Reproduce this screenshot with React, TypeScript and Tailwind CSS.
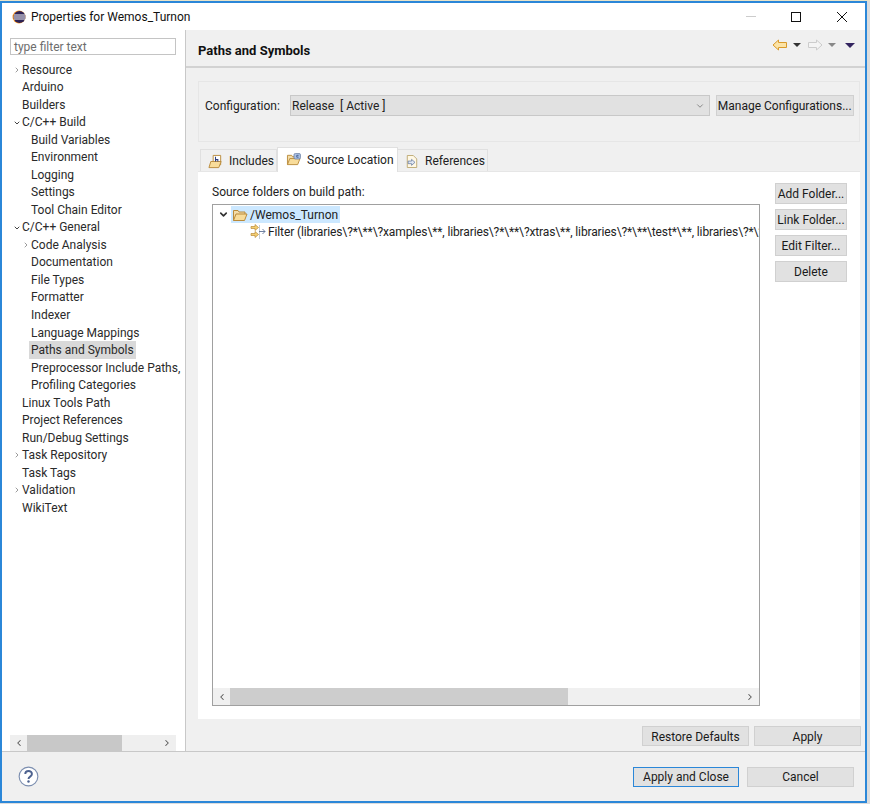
import { ChevronDown, ChevronLeft, ChevronRight } from "lucide-react";

const tree: [string, number, string?][] = [
  ["Resource", 1, "closed"],
  ["Arduino", 1],
  ["Builders", 1],
  ["C/C++ Build", 1, "open"],
  ["Build Variables", 2],
  ["Environment", 2],
  ["Logging", 2],
  ["Settings", 2],
  ["Tool Chain Editor", 2],
  ["C/C++ General", 1, "open"],
  ["Code Analysis", 2, "closed"],
  ["Documentation", 2],
  ["File Types", 2],
  ["Formatter", 2],
  ["Indexer", 2],
  ["Language Mappings", 2],
  ["Paths and Symbols", 2, "selected"],
  ["Preprocessor Include Paths,", 2],
  ["Profiling Categories", 2],
  ["Linux Tools Path", 1],
  ["Project References", 1],
  ["Run/Debug Settings", 1],
  ["Task Repository", 1, "closed"],
  ["Task Tags", 1],
  ["Validation", 1, "closed"],
  ["WikiText", 1],
];

function Btn({ label, className }: { label: string; className: string }) {
  return (
    <button className={`flex items-center justify-center whitespace-nowrap border border-[#d0d0d0] bg-[#e1e1e1] text-[12px] leading-none text-[#1a1a1a] ${className}`}>
      {label}
    </button>
  );
}

function TreeRow({ label, level, mark }: { label: string; level: number; mark?: string }) {
  return (
    <div className={`relative flex h-[17.52px] items-center whitespace-nowrap ${level === 1 ? "pl-[20px]" : "pl-[29px]"}`}>
      {mark === "closed" && (
        <ChevronRight className={`absolute top-[5px] h-[8px] w-[8px] text-[#888] ${level === 1 ? "left-[11px]" : "left-[20px]"}`} strokeWidth={2.5} />
      )}
      {mark === "open" && (
        <ChevronDown className="absolute left-[11px] top-[5px] h-[8px] w-[8px] text-[#444]" strokeWidth={3} />
      )}
      <span className={mark === "selected" ? "-ml-[2px] bg-[#d9d9d9] px-[2px]" : ""}>{label}</span>
    </div>
  );
}

function FolderIcon({ className, badge }: { className: string; badge?: boolean }) {
  return (
    <svg viewBox="0 0 16 14" className={className}>
      <path d="M1.5 12.5V2.5h4.5l1 1.5h6v2" fill="#f3dca8" stroke="#b98a3a" />
      <path d="M1.5 12.5L4 6h11l-2.5 6.5z" fill="#f8dc9a" stroke="#b98a3a" />
      {badge && (
        <>
          <rect x="8.5" y="0.5" width="7" height="6" rx="1.5" fill="#a9c0e4" stroke="#5a7098" strokeWidth="0.7" />
          <path d="M13.5 2.5h-2v2h2" fill="none" stroke="#2f4a80" strokeWidth="0.8" />
        </>
      )}
    </svg>
  );
}

export default function App() {
  return (
    <div className="h-[804px] w-[870px] overflow-hidden bg-[#dcdcdc] font-['Roboto',sans-serif] text-[12px] text-[#222]">
      <div className="h-px bg-[#e9e3c8]" />
      <div className="flex h-[802px] w-[867px] flex-col border-2 border-[#2b87d8] bg-white">
        {/* title bar */}
        <div className="flex h-[27px] shrink-0 items-center bg-white pl-[10px]">
          <svg viewBox="0 0 14 14" className="h-[14px] w-[14px]">
            <circle cx="7" cy="7" r="6.5" fill="#f7941e" />
            <circle cx="7.5" cy="7" r="6" fill="#2c2255" />
            <path d="M2 5h11M1.6 7h12M2 9h11" stroke="#fff" strokeWidth="1" />
          </svg>
          <span className="ml-[5px] text-[12px] text-[#111]">Properties for Wemos_Turnon</span>
          <div className="ml-auto flex items-center">
            <div className="mr-[35px] h-px w-[10px] bg-[#ccc]" />
            <div className="mr-[36px] h-[10px] w-[10px] border border-[#111]" />
            <svg viewBox="0 0 10 10" className="mr-[18px] h-[10px] w-[10px]">
              <path d="M0 0l10 10M10 0L0 10" stroke="#111" strokeWidth="1" />
            </svg>
          </div>
        </div>

        <div className="flex min-h-0 flex-1">
          {/* left tree */}
          <div className="flex w-[184px] shrink-0 flex-col border-r border-[#c8c8c8] bg-white">
            <div className="mx-[8px] mt-[8px] flex h-[17px] w-[166px] items-center border border-[#c4c4c4] px-[3px] text-[#6d6d6d]">
              type filter text
            </div>
            <div className="mt-[6px] flex-1 text-[#2a2a2a]">
              {tree.map(([label, level, mark]) => (
                <TreeRow key={label} label={label} level={level} mark={mark} />
              ))}
            </div>
            <div className="mx-[8px] flex h-[16px] w-[166px] items-center bg-[#efefef] text-[#555]">
              <div className="flex w-[17px] justify-center">
                <ChevronLeft className="h-[10px] w-[10px]" strokeWidth={2.5} />
              </div>
              <div className="h-full w-[95px] bg-[#c8c8c8]" />
              <div className="flex flex-1 justify-end pr-[4px]">
                <ChevronRight className="h-[10px] w-[10px]" strokeWidth={2.5} />
              </div>
            </div>
          </div>

          {/* right side */}
          <div className="flex min-w-0 flex-1 flex-col bg-[#f0f0f0]">
            <div className="flex h-[38px] shrink-0 items-center justify-between border-b-2 border-[#d2d2d2] pl-[12px] pr-[10px]">
              <span className="mt-[6px] text-[13px] font-bold text-[#111]">Paths and Symbols</span>
              <div className="-mt-[6px] flex items-center">
                <svg viewBox="0 0 16 12" className="h-[12px] w-[16px]">
                  <path d="M1 6l5.5-5v2.5h8v5h-8V11z" fill="#fbe3a6" stroke="#d99a2b" />
                </svg>
                <div className="ml-[5px] h-0 w-0 border-x-[4px] border-t-[4px] border-x-transparent border-t-[#333]" />
                <svg viewBox="0 0 16 12" className="ml-[6px] h-[12px] w-[16px]">
                  <path d="M15 6L9.5 1v2.5h-8v5h8V11z" fill="#f4f4f4" stroke="#ccc" />
                </svg>
                <div className="ml-[5px] h-0 w-0 border-x-[4px] border-t-[4px] border-x-transparent border-t-[#888]" />
                <div className="ml-[9px] h-0 w-0 border-x-[5px] border-t-[5px] border-x-transparent border-t-[#33245f]" />
              </div>
            </div>

            <div className="flex min-h-0 flex-1 flex-col pl-[12px] pr-[5px]">
              {/* configuration */}
              <div className="mt-[13px] flex h-[61px] shrink-0 items-start border border-[#e6e6e6] pl-[6px] pr-[5px] pt-[13px]">
                <span className="mt-[2px] w-[85px] shrink-0">Configuration:</span>
                <div className="flex h-[21px] w-[421px] items-center justify-between border border-[#c8c8c8] bg-[#e1e1e1] pl-[1px] pr-[4px]">
                  <span>Release&nbsp; [ Active ]</span>
                  <ChevronDown className="h-[10px] w-[10px] text-[#777]" />
                </div>
                <Btn label="Manage Configurations..." className="ml-[6px] h-[21px] w-[139px]" />
              </div>

              {/* tabs */}
              <div className="mt-[6px] flex h-[24px] shrink-0 items-end border-b border-[#e6e6e6]">
                <div className="ml-[2px] flex h-[22px] w-[77px] items-center gap-[6px] border border-b-0 border-[#e0e0e0] bg-[#f0f0f0] pl-[7px] pt-[1px]">
                  <svg viewBox="0 0 16 16" className="h-[15px] w-[15px] shrink-0">
                    <path d="M5.5 1.5h8v10h-8z" fill="#fff" stroke="#b98a3a" />
                    <path d="M1 14.5L3 8h11l-2.5 6.5z" fill="#f8dc9a" stroke="#b98a3a" />
                    <path d="M8 3v5M8 6h2.5v2" fill="none" stroke="#2f3f80" strokeWidth="1.1" />
                  </svg>
                  <span>Includes</span>
                </div>
                <div className="-mb-px flex h-[25px] w-[121px] items-center gap-[6px] border border-b-0 border-[#e0e0e0] bg-white pb-[1px] pl-[8px]">
                  <FolderIcon className="h-[13px] w-[15px] shrink-0" badge />
                  <span>Source Location</span>
                </div>
                <div className="flex h-[22px] w-[90px] items-center gap-[7px] border border-b-0 border-l-0 border-[#e0e0e0] bg-[#f0f0f0] pl-[8px] pt-[1px]">
                  <svg viewBox="0 0 14 16" className="h-[15px] w-[12px] shrink-0">
                    <path d="M1.5 1h7l4 4v10h-11z" fill="#fff8e6" stroke="#b9a46a" />
                    <path d="M2.5 7.5h4V5.5L10.5 9l-4 3.5v-2h-4z" fill="#dfe6f2" stroke="#5a7098" strokeWidth="0.8" />
                  </svg>
                  <span>References</span>
                </div>
              </div>

              {/* tab body */}
              <div className="flex min-h-0 flex-1 gap-[15px] bg-white pb-[13px] pl-[14px] pr-[13px] pt-[11px]">
                <div className="flex min-w-0 flex-1 flex-col">
                  <div className="flex h-[21px] shrink-0 items-start leading-[19px]">Source folders on build path:</div>
                  <div className="flex min-h-0 flex-1 flex-col overflow-hidden border border-[#a0a0a0]">
                    <div className="flex-1 overflow-hidden whitespace-nowrap pt-px">
                      <div className="flex h-[17px] items-center pl-[5px]">
                        <ChevronDown className="h-[11px] w-[11px] text-[#333]" strokeWidth={3.5} />
                        <div className="ml-[2px] flex h-[17px] items-center gap-[2px] bg-[#cce8ff] pl-px pr-[2px]">
                          <FolderIcon className="h-[14px] w-[16px]" />
                          <span>/Wemos_Turnon</span>
                        </div>
                      </div>
                      <div className="flex h-[17px] items-center pl-[37px]">
                        <svg viewBox="0 0 16 16" className="h-[16px] w-[16px] shrink-0">
                          <path d="M1 2.5h4V0.5l3.5 3-3.5 3v-2H1zM1 9.5h4v-2l3.5 3-3.5 3v-2H1z" fill="#f4cf72" stroke="#b98a3a" strokeWidth="0.7" />
                          <path d="M9.5 1v14" stroke="#b8bfca" strokeWidth="0.8" />
                          <path d="M9 7.5h6M12.5 5l2.5 2.5L12.5 10" fill="none" stroke="#5f7396" strokeWidth="0.9" />
                        </svg>
                        <span className="ml-[2px] tracking-[-0.12px]">{"Filter (libraries\\?*\\**\\?xamples\\**, libraries\\?*\\**\\?xtras\\**, libraries\\?*\\**\\test*\\**, libraries\\?*\\*"}</span>
                      </div>
                    </div>
                    <div className="flex h-[17px] shrink-0 items-center bg-[#f0f0f0] text-[#555]">
                      <div className="flex w-[17px] justify-center">
                        <ChevronLeft className="h-[10px] w-[10px]" strokeWidth={2.5} />
                      </div>
                      <div className="h-full w-[338px] bg-[#cdcdcd]" />
                      <div className="flex flex-1 justify-end pr-[4px]">
                        <ChevronRight className="h-[10px] w-[10px]" strokeWidth={2.5} />
                      </div>
                    </div>
                  </div>
                </div>
                <div className="flex w-[72px] shrink-0 flex-col gap-[5px]">
                  <Btn label="Add Folder..." className="h-[21px] w-[72px] pt-px" />
                  <Btn label="Link Folder..." className="h-[21px] w-[72px] pt-px" />
                  <Btn label="Edit Filter..." className="h-[21px] w-[72px]" />
                  <Btn label="Delete" className="h-[21px] w-[72px] pt-px" />
                </div>
              </div>

              <div className="-mr-px flex h-[32px] shrink-0 items-start justify-end gap-[5px] pt-[7px]">
                <Btn label="Restore Defaults" className="h-[20px] w-[107px] pt-px" />
                <Btn label="Apply" className="h-[20px] w-[107px] pt-px" />
              </div>
            </div>
          </div>
        </div>

        {/* footer */}
        <div className="flex h-[50px] shrink-0 items-center border-t border-[#c8c8c8] bg-[#f0f0f0] pl-[16px]">
          <svg viewBox="0 0 22 22" className="h-[21px] w-[21px]">
            <circle cx="11" cy="11" r="9.8" fill="#fff" stroke="#7d8fb0" strokeWidth="1.2" />
            <path d="M7.6 8.5c0-4.4 7-4.4 7 0 0 2.6-3.6 2.6-3.6 5" fill="none" stroke="#4d628f" strokeWidth="2" />
            <circle cx="11" cy="16.3" r="1.3" fill="#4d628f" />
          </svg>
          <div className="ml-auto flex gap-[8px] pr-[11px]">
            <Btn label="Apply and Close" className="h-[20px] w-[106px] pt-px !border-[#2b87d8]" />
            <Btn label="Cancel" className="h-[20px] w-[107px] pt-px" />
          </div>
        </div>
      </div>
    </div>
  );
}
